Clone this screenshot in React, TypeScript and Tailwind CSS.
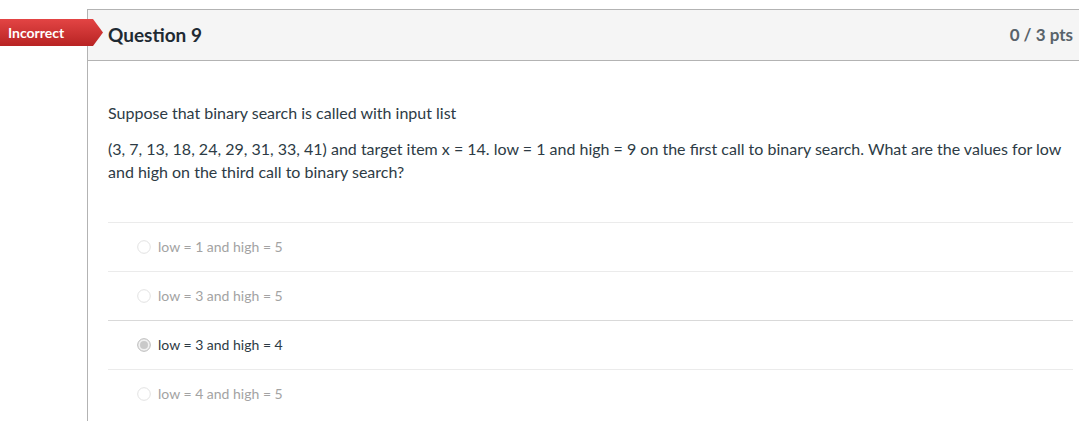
const ANSWERS = [
  { label: "low = 1 and high = 5", selected: false },
  { label: "low = 3 and high = 5", selected: false },
  { label: "low = 3 and high = 4", selected: true },
  { label: "low = 4 and high = 5", selected: false },
];

function Radio({ checked }: { checked: boolean }) {
  return (
    <svg width="14" height="14" viewBox="0 0 14 14" className="shrink-0">
      <circle
        cx="7"
        cy="7"
        r="6.3"
        fill={checked ? "#f1f1f1" : "#ffffff"}
        stroke={checked ? "#b8b8b8" : "#e2e2e2"}
        strokeWidth="1"
      />
      {checked ? <circle cx="7" cy="7" r="4" fill="#c9c9c9" /> : null}
    </svg>
  );
}

export default function App() {
  return (
    <div className="relative h-[421px] w-[1079px] overflow-hidden bg-white font-['Lato','Noto_Sans',sans-serif] text-[#2d3b45]">
      {/* incorrect flag */}
      <div className="absolute left-0 top-[19px] flex h-[27px] w-[103px] items-center bg-gradient-to-b from-[#e34444] to-[#b82323] pl-[8px] text-[14px] font-bold text-white [clip-path:polygon(0_0,93px_0,103px_50%,93px_100%,0_100%)]">
        Incorrect
      </div>

      <div className="ml-[87px] mt-[9px] min-h-[440px] w-[1010px] border-l border-t border-[#b3b3b3]">
        <div className="flex h-[51px] items-center justify-between border-b border-[#b3b3b3] bg-[#f5f5f5] pl-[20px] pr-[24px]">
          <span className="text-[19px] font-bold text-[#1f2a33]">Question 9</span>
          <span className="text-[17px] font-bold text-[#59636b]">0 / 3 pts</span>
        </div>

        <div className="pl-[20px] pr-[24px] pt-[40px]">
          <p className="text-[16px] leading-[23px]">Suppose that binary search is called with input list</p>
          <p className="mt-[13px] text-[16px] leading-[23px]">
            (3, 7, 13, 18, 24, 29, 31, 33, 41) and target item x = 14. low = 1 and high = 9 on the first call to binary search. What are the values for low and high on the third call to binary search?
          </p>

          <div className="mt-[39px]">
            {ANSWERS.map((a) => (
              <div
                key={a.label}
                className={
                  "flex h-[49px] items-center gap-[7px] border-t pb-[1px] pl-[29px] text-[14px] " +
                  (a.selected ? "border-[#d9d9d9] text-[#2d3b45]" : "border-[#ebebeb] text-[#a3a3a3]")
                }
              >
                <Radio checked={a.selected} />
                <span>{a.label}</span>
              </div>
            ))}
          </div>
        </div>
      </div>
    </div>
  );
}
